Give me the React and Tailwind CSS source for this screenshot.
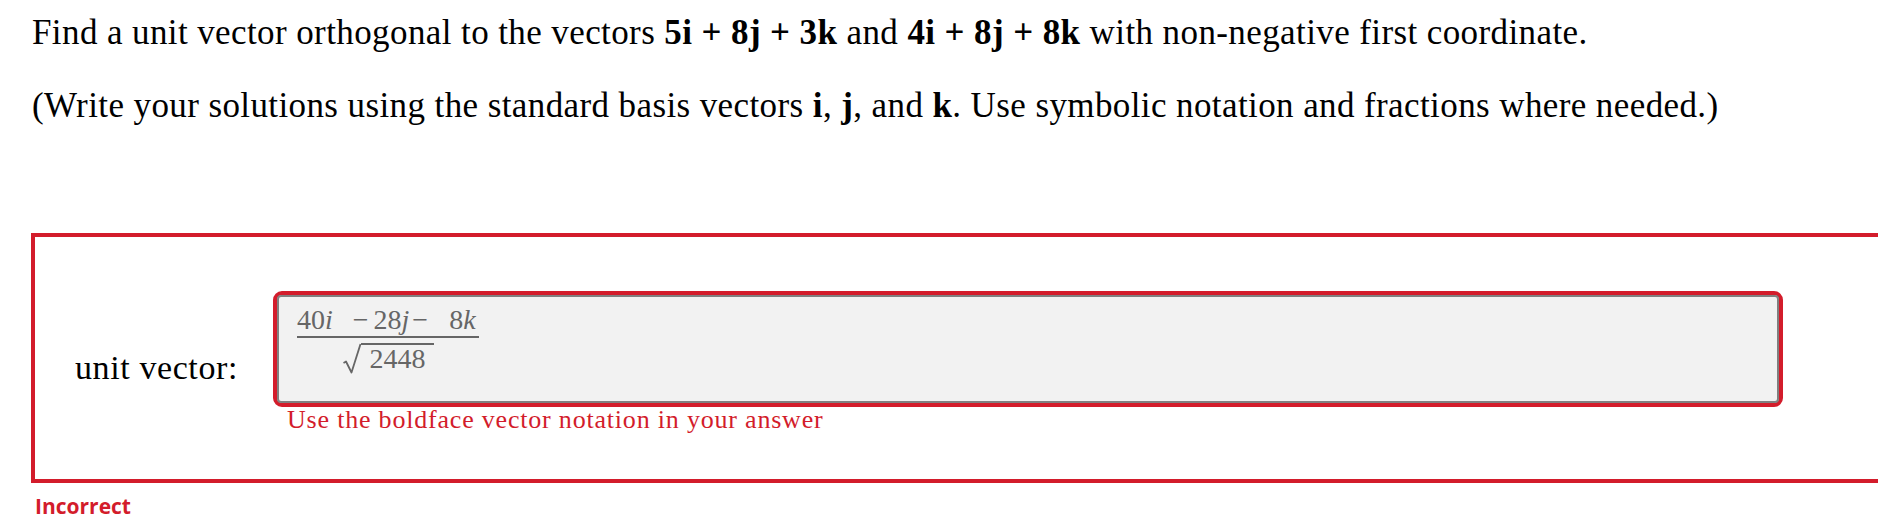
export default function App() {
    const red = 'text-[#d31c2b]';

    return (
        <div className="w-[1878px] h-[522px] overflow-hidden bg-white text-black font-['Liberation_Serif',serif]">
            <div className="pl-[32px] pt-[14px] text-[35px] leading-[38px] tracking-[0.4px]">
                <p>
                    Find a unit vector orthogonal to the vectors <b>5i + 8j + 3k</b> and <b>4i + 8j + 8k</b> with non-negative first coordinate.
                </p>
                <p className="mt-[35px]">
                    (Write your solutions using the standard basis vectors <b>i</b>, <b>j</b>, and <b>k</b>. Use symbolic notation and fractions where needed.)
                </p>
            </div>

            <div className="ml-[31px] mt-[108px] w-[1870px] border-4 border-[#d31c2b] pt-[54px] pb-[46px] pl-[40px] flex items-start">
                <div className="w-[198px] mt-[58px] text-[34px] leading-[38px] tracking-[0.6px]">unit vector:</div>

                <div className="flex flex-col">
                    <div className="w-[1510px] h-[116px] border-4 border-[#d31c2b] rounded-[9px]">
                        <div className="h-full border-2 border-[#808080] rounded-[4px] bg-[#f2f2f2] pl-[18px] pt-[9px]">
                            <div className="inline-flex flex-col items-center text-[28px] leading-[28px] text-[#666]">
                                <div className="w-[182px] border-b-2 border-[#666] pb-[2px] flex items-baseline whitespace-nowrap">
                                    <span>40<i>i</i></span>
                                    <span className="ml-[20px]">−</span>
                                    <span className="ml-[5px]">28<i>j</i></span>
                                    <span className="ml-[3px]">−</span>
                                    <span className="ml-[21px]">8<i>k</i></span>
                                </div>
                                <div className="flex items-start mt-[5px]">
                                    <svg width="18" height="31" viewBox="0 0 18 31" className="block">
                                        <path d="M0.5 20 L3 18.5 L8.5 29.5 L17.5 1" fill="none" stroke="#666" strokeWidth="1.8" strokeLinejoin="round" />
                                    </svg>
                                    <span className="border-t-2 border-[#666] pl-[9px] pr-[8px]">2448</span>
                                </div>
                            </div>
                        </div>
                    </div>
                    <div className={`ml-[14px] text-[26px] leading-[26px] tracking-[0.8px] ${red}`}>
                        Use the boldface vector notation in your answer
                    </div>
                </div>
            </div>

            <div className={`ml-[35px] mt-[10px] text-[21px] leading-[27px] font-bold font-['Open_Sans',sans-serif] ${red}`}>
                Incorrect
            </div>
        </div>
    );
}
